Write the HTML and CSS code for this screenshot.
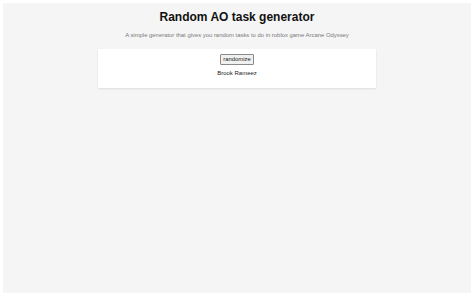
FILE: index.html
```html
<!DOCTYPE html>
<html>
<head>
<meta charset="utf-8">
<link rel="stylesheet" href="styles.css">
</head>
<body>
<main class="page">
  <h1 class="title">Random AO task generator</h1>
  <p class="subtitle">A simple generator that gives you random tasks to do in roblox game Arcane Odyssey</p>
  <section class="card">
    <button class="btn">randomize</button>
    <p class="result">Brook Rameez</p>
  </section>
</main>
</body>
</html>
```
FILE: styles.css
```css
html, body {
  height: 100%;
}
body {
  margin: 0;
  padding: 3px;
  box-sizing: border-box;
  background: #ffffff;
  font-family: "Liberation Sans", Arial, sans-serif;
}
.page {
  height: 100%;
  background: #f5f5f5;
  display: flex;
  flex-direction: column;
  align-items: center;
  padding-top: 7px;
  box-sizing: border-box;
}
.title {
  margin: 0;
  font-size: 12px;
  font-weight: bold;
  color: #111;
  line-height: 14px;
}
.subtitle {
  margin: 8px 0 0;
  font-size: 5.9px;
  color: #7a7a7a;
  line-height: 7px;
}
.card {
  margin-top: 10px;
  width: 278px;
  height: 39px;
  background: #fff;
  box-shadow: 0 1px 2px rgba(0,0,0,0.1);
  display: flex;
  flex-direction: column;
  align-items: center;
  padding-top: 5px;
  box-sizing: border-box;
}
.btn {
  font-family: "Liberation Sans", Arial, sans-serif;
  font-size: 5.9px;
  padding: 1px 2px;
  line-height: 7px;
  background: #f0f0f0;
  border: 1px solid #8a8a8a;
  border-radius: 1px;
  color: #222;
  margin: 0;
}
.result {
  margin: 5px 0 0;
  font-size: 6px;
  line-height: 7px;
  color: #222;
}
```
